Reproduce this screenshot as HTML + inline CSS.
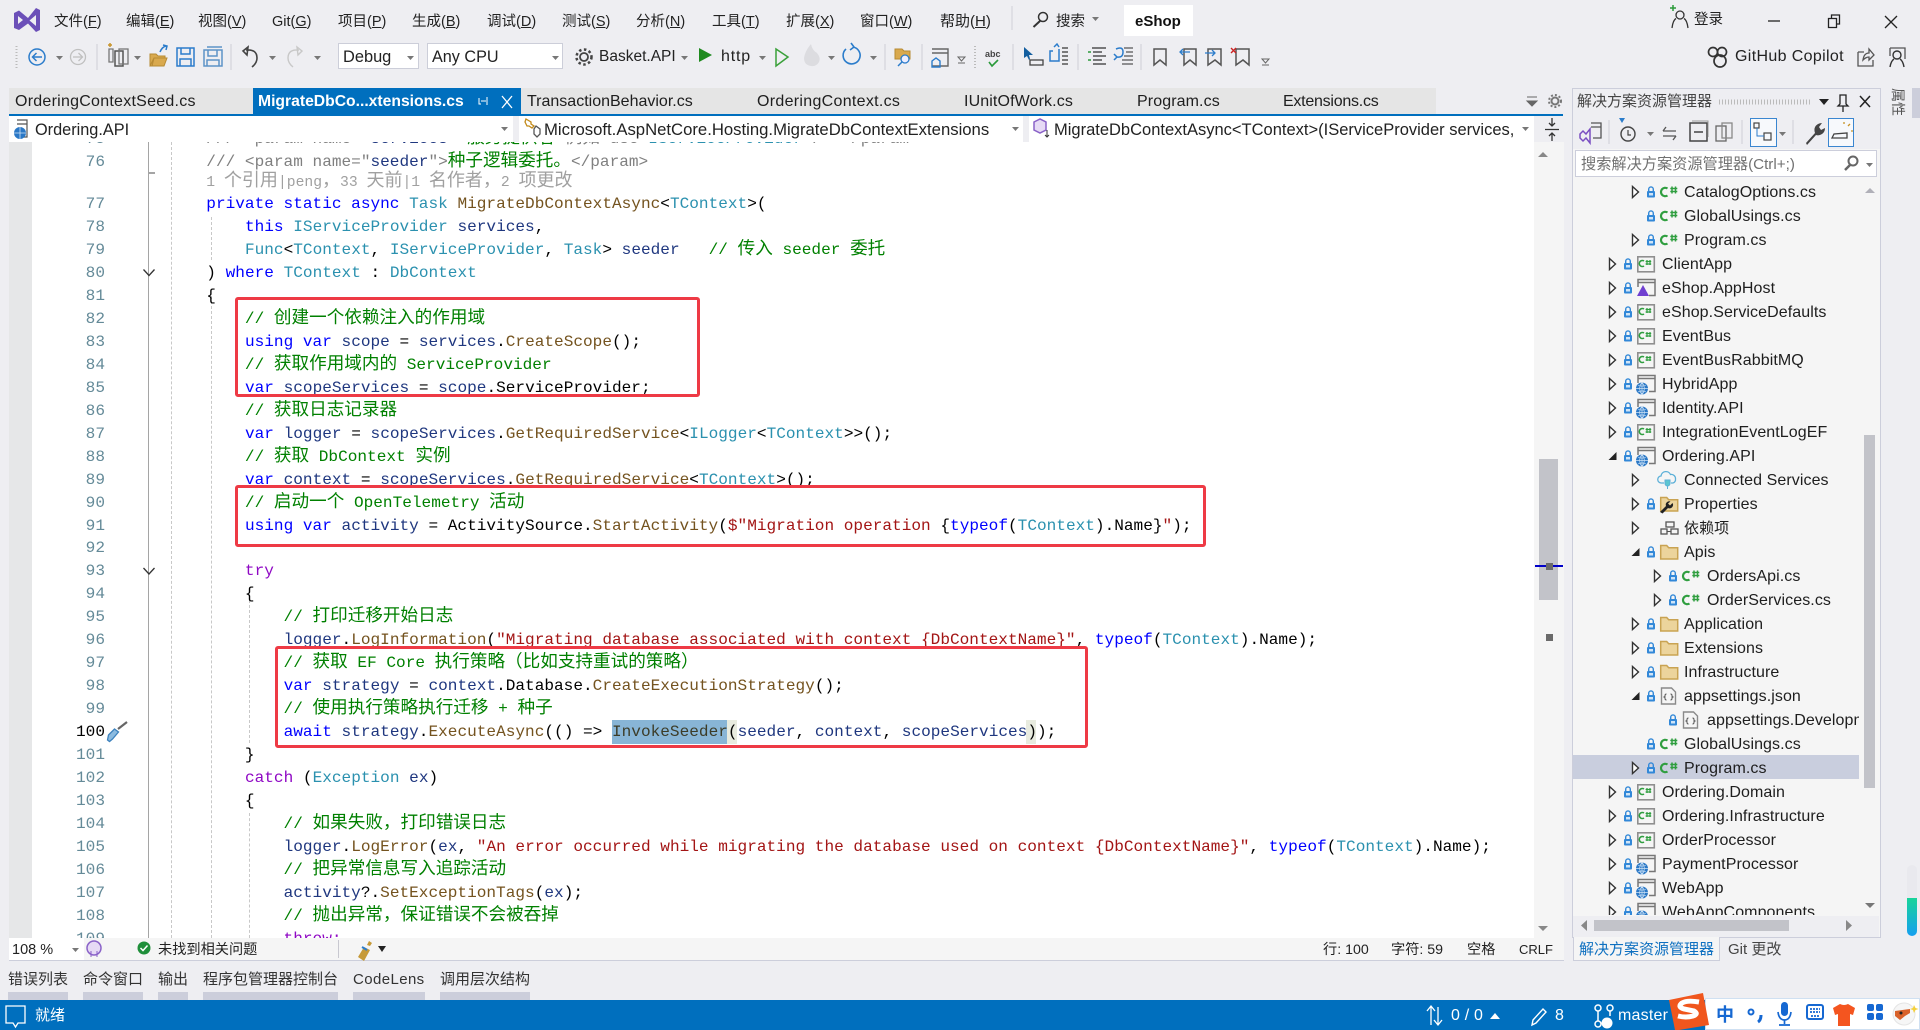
<!DOCTYPE html>
<html lang="zh"><head><meta charset="utf-8"><title>eShop</title>
<style>
html,body{margin:0;padding:0;width:1920px;height:1030px;overflow:hidden;background:#eeeef2}
body{position:relative;font-family:"Liberation Sans","Noto Sans CJK SC",sans-serif;font-size:15px;color:#222}
.b{position:absolute}
.t{position:absolute;white-space:nowrap;line-height:20px;height:20px}
u{text-decoration:underline}
.layer{position:absolute;left:0;top:0;width:1920px;height:1030px}
#code{clip-path:inset(142px 386px 92px 33px);font-family:"Liberation Mono","Noto Sans CJK SC",monospace;font-size:16.1px;color:#000}
.l{position:absolute;left:206.3px;margin-top:1px;height:23px;line-height:23px;white-space:pre}
.n{position:absolute;left:60px;margin-top:1px;width:45px;text-align:right;height:23px;line-height:23px;color:#648a98;font-family:"Liberation Mono",monospace;font-size:16.1px}
#code i{font-style:normal;font-family:"Noto Sans CJK SC",sans-serif;font-size:17.6px;line-height:0}
.k{color:#00f}.y{color:#2b91af}.m{color:#74531f}.v{color:#1f377f}.s{color:#a31515}.g{color:#008000}.p{color:#8f08c4}.d{color:#808080}
.box{position:absolute;border:3px solid #ee3a45;border-radius:3px;box-sizing:border-box}
#tree{clip-path:inset(178px 61px 115px 1573px)}
.r{position:absolute;white-space:nowrap;line-height:20px;height:20px;margin-top:1px;font-size:16px;letter-spacing:.08px;color:#1e1e1e}
.tab{position:absolute;top:92px;white-space:nowrap;font-size:16px;line-height:20px;color:#1e1e1e;letter-spacing:.3px}
.w{color:#fff}
.sh1{position:absolute;left:0;top:1px;width:0;height:0}
</style></head><body>

<!-- menu bar -->
<div class="sh1">
<div class="t" style="left:54px;top:11px;font-size:14.5px">文件(<u>F</u>)</div>
<div class="t" style="left:126px;top:11px;font-size:14.5px">编辑(<u>E</u>)</div>
<div class="t" style="left:198px;top:11px;font-size:14.5px">视图(<u>V</u>)</div>
<div class="t" style="left:272px;top:11px;font-size:14.5px">Git(<u>G</u>)</div>
<div class="t" style="left:338px;top:11px;font-size:14.5px">项目(<u>P</u>)</div>
<div class="t" style="left:412px;top:11px;font-size:14.5px">生成(<u>B</u>)</div>
<div class="t" style="left:487px;top:11px;font-size:14.5px">调试(<u>D</u>)</div>
<div class="t" style="left:562px;top:11px;font-size:14.5px">测试(<u>S</u>)</div>
<div class="t" style="left:636px;top:11px;font-size:14.5px">分析(<u>N</u>)</div>
<div class="t" style="left:712px;top:11px;font-size:14.5px">工具(<u>T</u>)</div>
<div class="t" style="left:786px;top:11px;font-size:14.5px">扩展(<u>X</u>)</div>
<div class="t" style="left:860px;top:11px;font-size:14.5px">窗口(<u>W</u>)</div>
<div class="t" style="left:940px;top:11px;font-size:15px">帮助(<u>H</u>)</div>
<div class="t" style="left:1056px;top:11px;font-size:14.5px">搜索</div>
</div>
<div class="b" style="left:1124px;top:5px;width:69px;height:31px;background:#fff"></div>
<div class="t" style="left:1135px;top:12px;font-size:15px;font-weight:bold;color:#111">eShop</div>
<div class="t" style="left:1694px;top:10px;font-size:14.5px">登录</div>

<!-- toolbar -->
<div class="b" style="left:338px;top:43px;width:81px;height:26px;background:#fff;border:1px solid #ccced9;box-sizing:border-box"></div>
<div class="t" style="left:343px;top:47px;font-size:16.4px">Debug</div>
<div class="b" style="left:427px;top:43px;width:136px;height:26px;background:#fff;border:1px solid #ccced9;box-sizing:border-box"></div>
<div class="t" style="left:432px;top:47px;font-size:16.2px">Any CPU</div>
<div class="t" style="left:599px;top:47px;font-size:15.5px">Basket.API</div>
<div class="t" style="left:721px;top:47px;font-size:16px;letter-spacing:.8px">http</div>
<div class="t" style="left:1735px;top:47px;font-size:16px;letter-spacing:.35px">GitHub Copilot</div>

<!-- document tabs -->
<div class="b" style="left:9px;top:88px;width:1427px;height:26px;background:#e5e5e5"></div>
<div class="b" style="left:253px;top:88px;width:268px;height:26px;background:#006fbe"></div>
<div class="b" style="left:9px;top:114px;width:1554px;height:2px;background:#006fbe"></div>
<div class="tab" style="left:15px;letter-spacing:.25px">OrderingContextSeed.cs</div>
<div class="tab" style="left:258px;color:#fff;font-weight:bold;letter-spacing:0;font-size:15.7px">MigrateDbCo...xtensions.cs</div>
<div class="tab" style="left:527px;letter-spacing:0">TransactionBehavior.cs</div>
<div class="tab" style="left:757px">OrderingContext.cs</div>
<div class="tab" style="left:964px;letter-spacing:.12px">IUnitOfWork.cs</div>
<div class="tab" style="left:1137px;letter-spacing:.1px">Program.cs</div>
<div class="tab" style="left:1283px;letter-spacing:-.25px">Extensions.cs</div>

<!-- nav dropdowns -->
<div class="b" style="left:9px;top:116px;width:504px;height:26px;background:#fff"></div>
<div class="b" style="left:519px;top:116px;width:504px;height:26px;background:#fff"></div>
<div class="b" style="left:1029px;top:116px;width:505px;height:26px;background:#fff"></div>
<div class="t" style="left:35px;top:120px;font-size:16.3px">Ordering.API</div>
<div class="t" style="left:544px;top:120px;font-size:16.7px">Microsoft.AspNetCore.Hosting.MigrateDbContextExtensions</div>
<div class="t" style="left:1054px;top:120px;font-size:16.5px">MigrateDbContextAsync&lt;TContext&gt;(IServiceProvider services,</div>

<!-- editor -->
<div class="b" style="left:9px;top:142px;width:23px;height:796px;background:#e6e7e8"></div>
<div class="b" style="left:32px;top:142px;width:1502px;height:796px;background:#fff"></div>
<div class="b" style="left:1534px;top:142px;width:30px;height:796px;background:#f5f5f5"></div>
<div class="b" style="left:1539px;top:459px;width:19px;height:141px;background:#c2c3c9"></div>
<div class="b" style="left:1535px;top:565px;width:28px;height:2px;background:#0000c8"></div>
<div class="b" style="left:1546px;top:563px;width:7px;height:7px;background:#6a6a6a"></div>
<div class="b" style="left:1546px;top:634px;width:7px;height:7px;background:#6a6a6a"></div>

<div class="layer" id="code">
<div class="b" style="left:147.500px;top:142px;width:1.5px;height:796px;background:#a5a5a5"></div>
<div class="b" style="left:147.500px;top:172px;width:7px;height:1.5px;background:#a5a5a5"></div>
<div class="b" style="left:171px;top:142px;height:796px;border-left:1px dashed #c8c8c8"></div>
<div class="b" style="left:211px;top:217px;height:43px;border-left:1px dashed #c8c8c8"></div>
<div class="b" style="left:211px;top:296px;height:642px;border-left:1px dashed #c8c8c8"></div>
<div class="b" style="left:249px;top:600px;height:143px;border-left:1px dashed #c8c8c8"></div>
<div class="b" style="left:249px;top:813px;height:125px;border-left:1px dashed #c8c8c8"></div>
<div class="b" style="left:611.5px;top:720px;width:115.5px;height:24px;background:#88b5d6"></div>
<div class="b" style="left:727px;top:720px;width:10px;height:24px;background:#e8ebdf"></div>
<div class="b" style="left:1026px;top:720px;width:10px;height:24px;background:#e8ebdf"></div>

<div class="n" style="top:127px">75</div><div class="l d" style="top:127px">/// &lt;param name="<span class="v">services</span>"&gt;<span class="g"><i>服务提供者</i></span> <i>例如</i> use <span class="y">IServiceProvider</span> /&gt; &lt;/param&gt;</div>
<div class="n" style="top:150px">76</div><div class="l d" style="top:150px">/// &lt;param name="<span class="v">seeder</span>"&gt;<span class="g"><i>种子逻辑委托。</i></span>&lt;/param&gt;</div>
<div class="l" style="top:171px;color:#a0a0a0;font-size:14.7px">1 <i style="font-size:18px">个引用</i>|peng<i style="font-size:18px">，</i>33 <i style="font-size:18px">天前</i>|1 <i style="font-size:18px">名作者，</i>2 <i style="font-size:18px">项更改</i></div>
<div class="n" style="top:192px">77</div><div class="l" style="top:192px"><span class="k">private static async</span> <span class="y">Task</span> <span class="m">MigrateDbContextAsync</span>&lt;<span class="y">TContext</span>&gt;(</div>
<div class="n" style="top:215px">78</div><div class="l" style="top:215px">    <span class="k">this</span> <span class="y">IServiceProvider</span> <span class="v">services</span>,</div>
<div class="n" style="top:238px">79</div><div class="l" style="top:238px">    <span class="y">Func</span>&lt;<span class="y">TContext</span>, <span class="y">IServiceProvider</span>, <span class="y">Task</span>&gt; <span class="v">seeder</span>   <span class="g">// <i>传入</i> seeder <i>委托</i></span></div>
<div class="n" style="top:261px">80</div><div class="l" style="top:261px">) <span class="k">where</span> <span class="y">TContext</span> : <span class="y">DbContext</span></div>
<div class="n" style="top:284px">81</div><div class="l" style="top:284px">{</div>
<div class="n" style="top:307px">82</div><div class="l g" style="top:307px">    // <i>创建一个依赖注入的作用域</i></div>
<div class="n" style="top:330px">83</div><div class="l" style="top:330px">    <span class="k">using var</span> <span class="v">scope</span> = <span class="v">services</span>.<span class="m">CreateScope</span>();</div>
<div class="n" style="top:353px">84</div><div class="l g" style="top:353px">    // <i>获取作用域内的</i> ServiceProvider</div>
<div class="n" style="top:376px">85</div><div class="l" style="top:376px">    <span class="k">var</span> <span class="v">scopeServices</span> = <span class="v">scope</span>.ServiceProvider;</div>
<div class="n" style="top:399px">86</div><div class="l g" style="top:399px">    // <i>获取日志记录器</i></div>
<div class="n" style="top:422px">87</div><div class="l" style="top:422px">    <span class="k">var</span> <span class="v">logger</span> = <span class="v">scopeServices</span>.<span class="m">GetRequiredService</span>&lt;<span class="y">ILogger</span>&lt;<span class="y">TContext</span>&gt;&gt;();</div>
<div class="n" style="top:445px">88</div><div class="l g" style="top:445px">    // <i>获取</i> DbContext <i>实例</i></div>
<div class="n" style="top:468px">89</div><div class="l" style="top:468px">    <span class="k">var</span> <span class="v">context</span> = <span class="v">scopeServices</span>.<span class="m">GetRequiredService</span>&lt;<span class="y">TContext</span>&gt;();</div>
<div class="n" style="top:491px">90</div><div class="l g" style="top:491px">    // <i>启动一个</i> OpenTelemetry <i>活动</i></div>
<div class="n" style="top:514px">91</div><div class="l" style="top:514px">    <span class="k">using var</span> <span class="v">activity</span> = ActivitySource.<span class="m">StartActivity</span>(<span class="s">$"Migration operation </span>{<span class="k">typeof</span>(<span class="y">TContext</span>).Name}<span class="s">"</span>);</div>
<div class="n" style="top:536px">92</div>
<div class="n" style="top:559px">93</div><div class="l p" style="top:559px">    try</div>
<div class="n" style="top:582px">94</div><div class="l" style="top:582px">    {</div>
<div class="n" style="top:605px">95</div><div class="l g" style="top:605px">        // <i>打印迁移开始日志</i></div>
<div class="n" style="top:628px">96</div><div class="l" style="top:628px">        <span class="v">logger</span>.<span class="m">LogInformation</span>(<span class="s">"Migrating database associated with context {DbContextName}"</span>, <span class="k">typeof</span>(<span class="y">TContext</span>).Name);</div>
<div class="n" style="top:651px">97</div><div class="l g" style="top:651px">        // <i>获取</i> EF Core <i>执行策略（比如支持重试的策略）</i></div>
<div class="n" style="top:674px">98</div><div class="l" style="top:674px">        <span class="k">var</span> <span class="v">strategy</span> = <span class="v">context</span>.Database.<span class="m">CreateExecutionStrategy</span>();</div>
<div class="n" style="top:697px">99</div><div class="l g" style="top:697px">        // <i>使用执行策略执行迁移</i> + <i>种子</i></div>
<div class="n" style="top:720px;color:#000">100</div><div class="l" style="top:720px">        <span class="k">await</span> <span class="v">strategy</span>.<span class="m">ExecuteAsync</span>(() =&gt; <span class="m" style="color:#3c3c28">InvokeSeeder</span>(<span class="v">seeder</span>, <span class="v">context</span>, <span class="v">scopeServices</span>));</div>
<div class="n" style="top:743px">101</div><div class="l" style="top:743px">    }</div>
<div class="n" style="top:766px">102</div><div class="l" style="top:766px">    <span class="p">catch</span> (<span class="y">Exception</span> <span class="v">ex</span>)</div>
<div class="n" style="top:789px">103</div><div class="l" style="top:789px">    {</div>
<div class="n" style="top:812px">104</div><div class="l g" style="top:812px">        // <i>如果失败，打印错误日志</i></div>
<div class="n" style="top:835px">105</div><div class="l" style="top:835px">        <span class="v">logger</span>.<span class="m">LogError</span>(<span class="v">ex</span>, <span class="s">"An error occurred while migrating the database used on context {DbContextName}"</span>, <span class="k">typeof</span>(<span class="y">TContext</span>).Name);</div>
<div class="n" style="top:858px">106</div><div class="l g" style="top:858px">        // <i>把异常信息写入追踪活动</i></div>
<div class="n" style="top:881px">107</div><div class="l" style="top:881px">        <span class="v">activity</span>?.<span class="m">SetExceptionTags</span>(<span class="v">ex</span>);</div>
<div class="n" style="top:904px">108</div><div class="l g" style="top:904px">        // <i>抛出异常，保证错误不会被吞掉</i></div>
<div class="n" style="top:927px">109</div><div class="l p" style="top:927px">        throw;</div>
</div>
<div class="box" style="left:235px;top:297px;width:465px;height:100px"></div>
<div class="box" style="left:235px;top:485px;width:971px;height:62px"></div>
<div class="box" style="left:275px;top:646px;width:813px;height:102px"></div>

<!-- editor status row -->
<div class="b" style="left:9px;top:938px;width:1555px;height:22px;background:#f5f5f5;border-bottom:1px solid #cccedb;box-sizing:content-box"></div>
<div class="b" style="left:9px;top:938px;width:75px;height:22px;background:#fff;border-bottom:1px solid #cccedb"></div>
<div class="t" style="left:12px;top:940px;font-size:14.5px">108 %</div>
<div class="t" style="left:158px;top:940px;font-size:14.2px">未找到相关问题</div>
<div class="b" style="left:338px;top:940px;width:1px;height:18px;background:#c8c8d0"></div>
<div class="t" style="left:1323px;top:940px;font-size:14.2px">行: 100</div>
<div class="t" style="left:1391px;top:940px;font-size:14.2px">字符: 59</div>
<div class="t" style="left:1467px;top:940px;font-size:14.2px">空格</div>
<div class="t" style="left:1519px;top:940px;font-size:13px">CRLF</div>

<!-- tool tabs -->
<div class="t" style="left:8px;top:970px;color:#333">错误列表</div>
<div class="t" style="left:83px;top:970px;color:#333">命令窗口</div>
<div class="t" style="left:158px;top:970px;color:#333">输出</div>
<div class="t" style="left:203px;top:970px;color:#333">程序包管理器控制台</div>
<div class="t" style="left:353px;top:970px;color:#333;letter-spacing:.4px">CodeLens</div>
<div class="t" style="left:440px;top:970px;color:#333">调用层次结构</div>
<div class="b" style="left:8px;top:992px;width:60px;height:8px;background:#cccedb"></div>
<div class="b" style="left:83px;top:992px;width:60px;height:8px;background:#cccedb"></div>
<div class="b" style="left:158px;top:992px;width:30px;height:8px;background:#cccedb"></div>
<div class="b" style="left:203px;top:992px;width:135px;height:8px;background:#cccedb"></div>
<div class="b" style="left:353px;top:992px;width:72px;height:8px;background:#cccedb"></div>
<div class="b" style="left:440px;top:992px;width:90px;height:8px;background:#cccedb"></div>

<!-- status bar -->
<div class="b" style="left:0;top:1000px;width:1920px;height:30px;background:#006fbe"></div>
<div class="t w" style="left:35px;top:1006px">就绪</div>
<div class="t w" style="left:1451px;top:1006px;font-size:16px;letter-spacing:.2px">0 / 0</div>
<div class="t w" style="left:1555px;top:1006px;font-size:16px">8</div>
<div class="t w" style="left:1618px;top:1006px;font-size:16px;letter-spacing:.2px">master</div>

<!-- solution explorer -->
<div class="b" style="left:1572px;top:88px;width:309px;height:850px;background:#f5f5f5;border:1px solid #cccedb;box-sizing:border-box"></div>
<div class="b" style="left:1573px;top:89px;width:307px;height:60px;background:#eeeef2"></div>
<div class="t" style="left:1577px;top:92px;font-size:15px;color:#444">解决方案资源管理器</div>
<div class="b" style="left:1575px;top:150px;width:302px;height:27px;background:#fff;border:1px solid #cccedb;box-sizing:border-box"></div>
<div class="t" style="left:1581px;top:155px;font-size:15.200px;color:#717171">搜索解决方案资源管理器(Ctrl+;)</div>
<div class="b" style="left:1864px;top:435px;width:11px;height:353px;background:#c2c3c9"></div>
<div class="b" style="left:1573px;top:916px;width:306px;height:21px;background:#eeeef2"></div>
<div class="b" style="left:1594px;top:920px;width:195px;height:11px;background:#c2c3c9"></div>
<div class="b" style="left:1573px;top:937px;width:147px;height:24px;background:#f5f5f5;border:1px solid #cccedb;border-top:none;box-sizing:border-box"></div>
<div class="t" style="left:1579px;top:940px;font-size:15px;color:#0e70c0">解决方案资源管理器</div>
<div class="t" style="left:1728px;top:940px;font-size:15px;color:#444">Git 更改</div>

<div class="layer" id="tree">
<div class="b" style="left:1573px;top:755px;width:286px;height:24px;background:#c9cede"></div>
<div class="r" style="left:1684px;top:182px">CatalogOptions.cs</div>
<div class="r" style="left:1684px;top:206px">GlobalUsings.cs</div>
<div class="r" style="left:1684px;top:230px">Program.cs</div>
<div class="r" style="left:1662px;top:254px">ClientApp</div>
<div class="r" style="left:1662px;top:278px">eShop.AppHost</div>
<div class="r" style="left:1662px;top:302px">eShop.ServiceDefaults</div>
<div class="r" style="left:1662px;top:326px">EventBus</div>
<div class="r" style="left:1662px;top:350px">EventBusRabbitMQ</div>
<div class="r" style="left:1662px;top:374px">HybridApp</div>
<div class="r" style="left:1662px;top:398px">Identity.API</div>
<div class="r" style="left:1662px;top:422px">IntegrationEventLogEF</div>
<div class="r" style="left:1662px;top:446px">Ordering.API</div>
<div class="r" style="left:1684px;top:470px">Connected Services</div>
<div class="r" style="left:1684px;top:494px">Properties</div>
<div class="r" style="left:1684px;top:518px;font-size:15px">依赖项</div>
<div class="r" style="left:1684px;top:542px">Apis</div>
<div class="r" style="left:1707px;top:566px">OrdersApi.cs</div>
<div class="r" style="left:1707px;top:590px">OrderServices.cs</div>
<div class="r" style="left:1684px;top:614px">Application</div>
<div class="r" style="left:1684px;top:638px">Extensions</div>
<div class="r" style="left:1684px;top:662px">Infrastructure</div>
<div class="r" style="left:1684px;top:686px">appsettings.json</div>
<div class="r" style="left:1707px;top:710px">appsettings.Development.json</div>
<div class="r" style="left:1684px;top:734px">GlobalUsings.cs</div>
<div class="r" style="left:1684px;top:758px">Program.cs</div>
<div class="r" style="left:1662px;top:782px">Ordering.Domain</div>
<div class="r" style="left:1662px;top:806px">Ordering.Infrastructure</div>
<div class="r" style="left:1662px;top:830px">OrderProcessor</div>
<div class="r" style="left:1662px;top:854px">PaymentProcessor</div>
<div class="r" style="left:1662px;top:878px">WebApp</div>
<div class="r" style="left:1662px;top:902px">WebAppComponents</div>

<svg class="layer" width="1920" height="1030" viewBox="0 0 1920 1030">
<defs>
<g id="a"><path d="M-2.5-5.5 3.5 0-2.5 5.5Z" fill="#fff" stroke="#333" stroke-width="1.4"/></g>
<g id="o"><path d="M-3.5 4H4.5V-4Z" fill="#222"/></g>
<g id="lk"><rect x="12" y="-1" width="8" height="6.5" rx="1" fill="#3288d8"/><rect x="14" y="1" width="4" height="2.5" fill="#cfe4f7"/><path d="M13.7-1v-1.8a2.3 2.3 0 0 1 4.6 0V-1" fill="none" stroke="#3288d8" stroke-width="1.4"/></g>
<g id="cs"><path d="M32.5-3.5a4.2 4.2 0 1 0 0 7" fill="none" stroke="#2f9e3f" stroke-width="2.200"/><path d="M37-5.5v7M40.5-5.5v7M35.3-3.5h7M35.3-.5h7" stroke="#2f9e3f" stroke-width="1.500" fill="none"/></g>
<g id="pr"><rect x="25.8" y="-7.2" width="16.5" height="15" fill="#f5f5f5" stroke="#8f8f8f" stroke-width="1.6"/><path d="M32-3a3 3 0 1 0 0 5" fill="none" stroke="#2f9e3f" stroke-width="1.6"/><path d="M35-4v5M38-4v5M33.6-2.500h5.6M33.6 0h5.6" stroke="#2f9e3f" stroke-width="1.200" fill="none"/></g>
<g id="wn"><path d="M26-1V-8.5H43V7.5H37M26-5.5H43" fill="none" stroke="#777" stroke-width="1.5"/></g>
<g id="gl"><circle cx="30" cy="4.5" r="6" fill="#2a78c6"/><path d="M24 4.5h12M30-1.5v12M26 1a8 8 0 0 0 8 0M26 8a8 8 0 0 1 8 0M30-1.5a9 9 0 0 0 0 12M30-1.5a9 9 0 0 1 0 12" fill="none" stroke="#cfe3f6" stroke-width=".7"/></g>
<g id="fd"><path d="M25.7-6.5h6l2 2.2h9v11.3H25.7Z" fill="#ecd49c" stroke="#c9a352" stroke-width="1.5"/></g>
<g id="js"><path d="M26.5-8h10l4 4V8h-14Z" fill="#f5f5f5" stroke="#8a8a8a" stroke-width="1.4"/><path d="M31.5-2q-1.5 0-1.5 1.5v1L29 1l1 .5v1q0 1.5 1.5 1.5M35.5-2q1.5 0 1.5 1.5v1L38 1l-1 .5v1q0 1.5-1.5 1.5" fill="none" stroke="#555" stroke-width="1"/></g>
<g id="rc"><use href="#a"/><use href="#lk"/><use href="#cs"/></g>
<g id="nc"><use href="#lk"/><use href="#cs"/></g>
<g id="rp"><use href="#a"/><use href="#lk"/><use href="#pr"/></g>
<g id="rw"><use href="#a"/><use href="#lk"/><use href="#wn"/><use href="#gl"/></g>
<g id="rf"><use href="#a"/><use href="#lk"/><use href="#fd"/></g>
</defs>
<use href="#rc" x="1635" y="192"/><use href="#nc" x="1635" y="216"/><use href="#rc" x="1635" y="240"/>
<use href="#rp" x="1612" y="264"/>
<g transform="translate(1612 288)"><use href="#a"/><use href="#lk"/><use href="#wn"/><path d="M31-3 37 8H25Z" fill="#6f3fd0"/></g>
<use href="#rp" x="1612" y="312"/><use href="#rp" x="1612" y="336"/><use href="#rp" x="1612" y="360"/>
<use href="#rw" x="1612" y="384"/><use href="#rw" x="1612" y="408"/><use href="#rp" x="1612" y="432"/>
<g transform="translate(1612 456)"><use href="#o"/><use href="#lk"/><use href="#wn"/><use href="#gl"/></g>
<g transform="translate(1635 480)"><use href="#a"/><path d="M29 3h-2.5a3.5 3.5 0 0 1-.5-7 5 5 0 0 1 9.5-1.5 4.2 4.2 0 0 1 5 4.5 3.5 3.5 0 0 1-2.5 4H36" fill="none" stroke="#5cb0d8" stroke-width="1.3"/><path d="M30 0v3.5a2.5 2.5 0 0 0 5 0V0ZM32.5 6v3" fill="#5cc6d0" stroke="#5cb0d8"/></g>
<g transform="translate(1635 504)"><use href="#rf"/><path d="M25 8l6-6a3.5 3.5 0 0 1 4.5-4.500L33-.5l2 2 2.500-2.500A3.500 3.500 0 0 1 33 4l-5.500 5.500Z" fill="#222"/></g>
<g transform="translate(1635 528)"><use href="#a"/><rect x="26" y="1" width="6" height="5" fill="none" stroke="#555" stroke-width="1.300"/><rect x="36" y="1" width="7" height="5" fill="none" stroke="#555" stroke-width="1.300"/><rect x="31" y="-6" width="8" height="5" fill="none" stroke="#555" stroke-width="1.300"/><path d="M32 3.500h4" stroke="#555"/></g>
<g transform="translate(1635 552)"><use href="#o"/><use href="#lk"/><use href="#fd"/></g>
<use href="#rc" x="1657" y="576"/><use href="#rc" x="1657" y="600"/>
<use href="#rf" x="1635" y="624"/><use href="#rf" x="1635" y="648"/><use href="#rf" x="1635" y="672"/>
<g transform="translate(1635 696)"><use href="#o"/><use href="#lk"/><use href="#js"/></g>
<g transform="translate(1657 720)"><use href="#lk"/><use href="#js"/></g>
<use href="#nc" x="1635" y="744"/><use href="#rc" x="1635" y="768"/>
<use href="#rp" x="1612" y="792"/><use href="#rp" x="1612" y="816"/><use href="#rp" x="1612" y="840"/>
<use href="#rw" x="1612" y="864"/><use href="#rw" x="1612" y="888"/><use href="#rw" x="1612" y="912"/>
</svg>
</div>

<!-- right strip -->
<div class="b" style="left:1890px;top:88px;width:15px;font-size:14px;line-height:15px;color:#555;writing-mode:vertical-rl;text-orientation:sideways;white-space:nowrap">属性</div>
<div class="b" style="left:1912px;top:88px;width:8px;height:30px;background:#cccedb"></div>

<!-- IME -->
<div class="b" style="left:1705px;top:998px;width:215px;height:32px;background:#fff;border:1px solid #cfe0f2;box-sizing:border-box"></div>
<div class="t" style="left:1716px;top:1005px;font-size:18px;font-weight:bold;color:#1668d2">中</div>

<!-- icons -->
<svg class="layer" width="1920" height="1030" viewBox="0 0 1920 1030" fill="none">
<!-- VS logo -->
<path d="M14 13 19 10.500 28 18 36 8 40 10V30L36 32 28 23.500 19 30 14 28ZM18 16V24L23 20ZM29.500 20.500 36 26V15Z" fill="#6b4fb8" fill-rule="evenodd"/>
<!-- title icons -->
<path d="M1012 6v24" stroke="#d0d0d8"/>
<circle cx="1043" cy="17" r="4.500" stroke="#333" stroke-width="1.500"/><path d="M1040 21l-6.500 6" stroke="#333" stroke-width="2"/>
<path d="M1092 17h7l-3.500 4Z" fill="#777"/>
<path d="M1670 8h6M1673 5v6" stroke="#2a9a3a" stroke-width="1.500"/><circle cx="1680" cy="15" r="4" stroke="#333" stroke-width="1.300"/><path d="M1672 28q1-8 4-9.500M1688 28q-1-8-4-9.500" stroke="#333" stroke-width="1.300"/>
<path d="M1768 21h12" stroke="#222" stroke-width="1.300"/>
<path d="M1828.500 18.500h8v9h-8ZM1831.500 18v-3h8v9h-3" stroke="#222" stroke-width="1.300"/>
<path d="M1885 16l12 12M1897 16l-12 12" stroke="#222" stroke-width="1.300"/>
<!-- toolbar icons -->
<path d="M16.500 46v22" stroke="#bbb" stroke-width="2" stroke-dasharray="1 2"/>
<circle cx="37" cy="57" r="8" stroke="#2b7ccb" stroke-width="1.500"/><path d="M42 57h-9M36.500 53l-4 4 4 4" stroke="#2b7ccb" stroke-width="1.500"/>
<path d="M56 56h7l-3.500 4ZM134 56h7l-3.500 4ZM269 56h7l-3.500 4ZM314 56h7l-3.500 4ZM681 56h7l-3.500 4ZM759 56h7l-3.500 4ZM828 56h7l-3.500 4ZM870 56h7l-3.500 4Z" fill="#777"/>
<circle cx="78" cy="57" r="7.500" stroke="#c0c0c0" stroke-width="1.300"/><path d="M73 57h9M78.500 53l4 4-4 4" stroke="#c0c0c0" stroke-width="1.300"/>
<path d="M97 44v26M231 44v26M885 44v26M922 44v26M1013 44v26M1078 44v26M1141 44v26" stroke="#cfcfd6"/>
<path d="M109 49h4v13h-4Z" stroke="#777" stroke-width="1.300"/><rect x="115" y="51" width="8" height="15" stroke="#555" stroke-width="1.500"/><rect x="119" y="49" width="9" height="15" stroke="#777" stroke-width="1.300"/><path d="M108 45h4M110 43v4" stroke="#c8942a" stroke-width="1.500"/>
<path d="M150 66V54h6l2 2h7v2h-11l-2 8Zm4-8h13l-3 8h-14Z" fill="#d9a94e" stroke="#b78a33"/><path d="M160 52q2-5 6-6M163 45l4 1-1 4" stroke="#2b7ccb" stroke-width="1.500"/>
<path d="M177 48h17v18h-17ZM181 48v6h9v-6M180 59h11v7h-11Z" stroke="#2b7ccb" stroke-width="1.500"/>
<path d="M204 50h18v16h-18ZM208 50v6h9v-6M207 60h12v6h-12ZM207 47h15" stroke="#5d93c8" stroke-width="1.500"/>
<path d="M243 51l5-4-1 8ZM246 50q11-1 11 8 0 5-5 9" stroke="#444" stroke-width="1.600" fill="none"/>
<path d="M302 51l-5-4 1 8ZM299 50q-11-1-11 8 0 5 5 9" stroke="#c8c8c8" stroke-width="1.400"/>
<path d="M407 56h7l-3.500 4ZM552 56h7l-3.500 4Z" fill="#777"/>
<circle cx="584" cy="57" r="4" stroke="#444" stroke-width="1.800"/><circle cx="584" cy="57" r="7.500" stroke="#444" stroke-width="2.500" stroke-dasharray="2.500 2.500"/>
<path d="M699 48 712 55 699 62Z" fill="#1f8a1f" />
<path d="M776 49 788 57 776 66Z" stroke="#3aa03a" stroke-width="1.500"/>
<path d="M811 44q1 6 6 9 4 5 2 9-3 5-8 4-7-1-7-8 1-7 7-14Z" fill="#dcdce0"/>
<path d="M846 49a8.500 8.500 0 1 0 7-2M851 43l3 4-4 3" stroke="#2b7ccb" stroke-width="1.600"/>
<path d="M895 49h7l2 2h6v8h-15Z" fill="#d9a94e" stroke="#b78a33"/><circle cx="905" cy="59" r="4" fill="#eef" stroke="#2b7ccb" stroke-width="1.300"/><path d="M902 62l-4 4" stroke="#2b7ccb" stroke-width="1.500"/>
<path d="M932 49h16v17h-16M932 53h16" stroke="#666" stroke-width="1.400"/><path d="M932 61l4-3 4 3v6h-8Z" stroke="#2b7ccb" stroke-width="1.400"/>
<path d="M958 57h7l-3.500 4ZM958 63h7" stroke="#666"/>
<path d="M975 46v22" stroke="#bbb" stroke-width="2" stroke-dasharray="1 2"/>
<text x="985" y="57" font-family="Liberation Sans" font-size="9" font-weight="bold" fill="#444">abc</text><path d="M989 62l3 4 6-6" stroke="#2a9a3a" stroke-width="1.600"/>
<path d="M1024 47v11l3-2 2 4 1-1-1-4h4Z" fill="#135e9f"/><rect x="1030" y="60" width="13" height="5" stroke="#444" stroke-width="1.300"/>
<path d="M1059 49v12h-9v-10h3M1054 47l3-3 2 3" stroke="#2b7ccb" stroke-width="1.500"/><path d="M1062 48h6M1062 52h6M1062 56h6M1062 60h6M1062 64h6" stroke="#555" stroke-width="1.500"/>
<path d="M1092 48h14M1093 52h9M1093 56h13M1093 60h9M1093 64h13" stroke="#333" stroke-width="1.300"/><path d="M1088 52h3M1088 60h3" stroke="#2a9a3a" stroke-width="1.500"/>
<path d="M1116 49q7-3 7 3t-6 5M1114 54l3 3-3 3" stroke="#2b7ccb" stroke-width="1.500"/><path d="M1124 48h9M1126 52h7M1124 56h9M1122 60h11M1122 64h11" stroke="#555" stroke-width="1.300"/>
<path d="M1154 49h12v16l-6-5-6 5Z" stroke="#555" stroke-width="1.500"/>
<path d="M1184 49h12v16l-6-5-6 5Z" stroke="#555" stroke-width="1.500"/><path d="M1190 52h-10M1183 49l-3 3 3 3" stroke="#2b7ccb" stroke-width="1.300"/>
<path d="M1208 49h13v16l-6-5-7 5Z" stroke="#555" stroke-width="1.500"/><path d="M1205 53h10M1212 50l3 3-3 3" stroke="#2b7ccb" stroke-width="1.300"/>
<path d="M1236 49h13v16l-6-5-7 5Z" stroke="#555" stroke-width="1.500"/><path d="M1231 48l5 5M1236 48l-5 5" stroke="#c22" stroke-width="1.400"/>
<path d="M1262 59h7l-3.500 4ZM1262 65h7" stroke="#666"/>
<circle cx="1713" cy="52" r="4.500" stroke="#333" stroke-width="1.700"/><circle cx="1722" cy="52" r="4.500" stroke="#333" stroke-width="1.700"/><circle cx="1720" cy="61" r="6" stroke="#333" stroke-width="1.700"/>
<path d="M1858 52h6M1858 52v14h15v-6M1863 60q1-7 6-7v-4l5 6-5 5v-3q-3 0-6 3Z" stroke="#555" stroke-width="1.300"/>
<path d="M1890 48h15v11M1890 48v8" stroke="#555" stroke-width="1.300"/><circle cx="1897" cy="55" r="4" stroke="#333" stroke-width="1.400"/><path d="M1890 67q1-6 4-8M1904 67q-1-6-4-8" stroke="#333" stroke-width="1.400"/>
<!-- doc tab extras -->
<path d="M481 101h5M487 97v8M479 98v6h2" stroke="#fff" stroke-width="1"/>
<path d="M502 96l10 12M512 96l-10 12" stroke="#fff" stroke-width="1.300"/>
<path d="M1527 97h10M1527 101h10l-5 5Z" fill="#666" stroke="#666"/>
<circle cx="1555" cy="101" r="3.500" stroke="#777" stroke-width="2"/><circle cx="1555" cy="101" r="6" stroke="#777" stroke-width="2" stroke-dasharray="2 2"/>
<!-- nav -->
<path d="M501 127h7l-3.500 4ZM1012 127h7l-3.500 4ZM1522 127h7l-3.500 4Z" fill="#777"/>
<path d="M17 120h10v17h-10M17 124h10" stroke="#555" stroke-width="1.200"/><circle cx="20" cy="133" r="6" fill="#2a78c6"/><path d="M14 133h12M20 127v12" stroke="#cfe3f6" stroke-width=".8"/>
<path d="M526 119l5 3v2l3 2-2 2-3-2h-2l-2-4Z" stroke="#c28a1a" stroke-width="1.300"/><path d="M536 126l4 3v5l-3 3-3-3v-5Z" stroke="#555" stroke-width="1.300"/>
<path d="M1034 122l6-3 6 3v8l-6 3-6-3Z" stroke="#8a62c8" stroke-width="1.500" fill="#e6daf5"/><path d="M1047 130v7M1045 135l2 2 2-2" stroke="#333"/>
<path d="M1545 129.500h14M1552 118v8M1549 123l3 3 3-3M1552 141v-8M1549 136l3-3 3 3" stroke="#333" stroke-width="1.300"/>
<!-- solution header -->
<path d="M1719 102h92" stroke="#bbb" stroke-width="5" stroke-dasharray="1 2"/>
<path d="M1819 99h10l-5 6Z" fill="#222"/>
<path d="M1840 95h6v9l2 2h-10l2-2Zm3 11v6" stroke="#222" stroke-width="1.300"/>
<path d="M1860 96l10 11M1870 96l-10 11" stroke="#222" stroke-width="1.500"/>
<!-- solution toolbar -->
<path d="M1609 120v24M1742 120v24M1793 120v24" stroke="#cfcfd6"/>
<path d="M1591 123h10v15h-8M1591 127h10" stroke="#555" stroke-width="1.300"/><path d="M1580 134l3-3 3 3 4-5v14l-4-5-3 3-3-3Z" stroke="#7a4ec2" stroke-width="1.500"/>
<path d="M1619 118h6l-3 5Z" fill="#2b7ccb"/><circle cx="1628" cy="134" r="7" stroke="#444" stroke-width="1.400"/><path d="M1628 130v5h3" stroke="#444" stroke-width="1.200"/>
<path d="M1647 132h7l-3.500 4ZM1779 132h7l-3.500 4Z" fill="#777"/>
<path d="M1663 131h13M1666 127l-3 4M1663 136h13M1676 136l-3 4" stroke="#555" stroke-width="1.300"/>
<rect x="1690" y="123" width="17" height="18" stroke="#444" stroke-width="1.500"/><path d="M1694 132h9" stroke="#444" stroke-width="1.500"/><path d="M1692 121h16v16" stroke="#999"/>
<rect x="1716" y="126" width="10" height="15" stroke="#666" stroke-width="1.300"/><rect x="1722" y="123" width="10" height="15" stroke="#888" stroke-width="1.300"/>
<rect x="1750.500" y="118.500" width="26" height="28" fill="#f7f9fc" stroke="#3a86d0"/>
<rect x="1754" y="123" width="5" height="5" stroke="#444" stroke-width="1.200"/><rect x="1764" y="133" width="7" height="7" stroke="#444" stroke-width="1.200"/><path d="M1757 128v8h7" stroke="#2b7ccb"/>
<path d="M1806 143l9-10q-2-6 3-9 2-1 4-1l-3 4 2 3 4-2q0 4-3 6-3 2-6 1l-9 10Z" fill="#444"/>
<rect x="1828.500" y="118.500" width="25" height="28" fill="#f7f9fc" stroke="#3a86d0"/>
<path d="M1832 138h15v-5l-13 1Z" stroke="#444" stroke-width="1.300"/><path d="M1848 126l2-2M1851 131h2M1844 124v-2" stroke="#c8942a" stroke-width="1.300"/>
<!-- search + scroll arrows -->
<circle cx="1853" cy="161" r="4.500" stroke="#666" stroke-width="2"/><path d="M1850 165l-5 5" stroke="#666" stroke-width="2.500"/>
<path d="M1866 163h7l-3.500 4Z" fill="#777"/>
<path d="M1865 193l5-5 5 5Z" fill="#b0b0b8"/>
<path d="M1865 903l5 5 5-5Z" fill="#777"/>
<path d="M1587 920l-6 5.500 6 5.500ZM1846 920l6 5.500-6 5.500Z" fill="#888"/>
<path d="M1538 157l5-5 5 5ZM1538 926l5 5 5-5Z" fill="#888"/>
<!-- chevrons -->
<path d="M143.500 269.500l5.500 6 5.500-6M143.500 568l5.500 6 5.500-6" stroke="#333" stroke-width="1.300"/>
<path d="M107.500 740l1-5 6-6 4 3-6 7-3 2.500Z" fill="#8cbbe0" stroke="#3d82bd" stroke-width="1.300"/><path d="M118 729l9-7" stroke="#666" stroke-width="2.200"/>
<!-- status row icons -->
<path d="M72 948h7l-3.500 4Z" fill="#777"/>
<circle cx="94" cy="948" r="7" stroke="#8a62c8" stroke-width="1.500" fill="#e6daf5"/><path d="M91 957v-6M97 957v-6" stroke="#8a62c8"/>
<circle cx="144" cy="948" r="6.500" fill="#1f8f3a"/><path d="M140.500 948l2.500 2.500 4.500-5" stroke="#fff" stroke-width="1.500"/>
<path d="M358 957l6-10 6 3-6 11ZM367 945l2-4 3 2-2 3" fill="#c69a38"/><path d="M362 947l5 3" stroke="#2b7ccb" stroke-width="2"/>
<path d="M378 946h8l-4 6Z" fill="#222"/>
<!-- status bar icons -->
<path d="M6 1006h19v17h-7l-2.500 4-2.500-4H6Z" stroke="#fff" stroke-width="1.300"/>
<path d="M1431 1025v-18M1427 1011l4-5 4 5M1438 1007v18M1434 1020l4 5 4-5" stroke="#fff" stroke-width="1.300"/>
<path d="M1490 1019l5-6 5 6Z" fill="#fff"/>
<path d="M1532 1025l1-5 10-11 3 3-10 11Z" stroke="#fff" stroke-width="1.400"/>
<circle cx="1598" cy="1008" r="3" stroke="#fff" stroke-width="1.500"/><circle cx="1610" cy="1008" r="3" stroke="#fff" stroke-width="1.500"/><circle cx="1598" cy="1024" r="3" stroke="#fff" stroke-width="1.500"/><circle cx="1607" cy="1023" r="5.500" fill="#fff"/><path d="M1598 1011v10M1610 1011v5" stroke="#fff" stroke-width="1.500"/>
<!-- sogou -->
<path d="M1669 1000 1703 993 1709 1025 1679 1030 1675 1030Z" fill="#f0561d"/>
<path d="M1699 1002q-12-2-17 1-5 4 2 6l10 2q5 3-1 5-7 2-15 0" stroke="#fff" stroke-width="5"/>
<!-- ime icons -->
<circle cx="1751" cy="1012" r="2.500" stroke="#1668d2" stroke-width="2"/><path d="M1761 1015q0 5-3 7" stroke="#1668d2" stroke-width="3"/>
<rect x="1781" y="1002" width="7" height="14" rx="3.500" fill="#1668d2"/><path d="M1778 1012q1 8 6.500 8t6.500-8M1784.500 1020v4M1779 1025h11" stroke="#1668d2" stroke-width="1.700"/>
<rect x="1807" y="1005" width="16" height="14" rx="2" stroke="#1668d2" stroke-width="2"/><path d="M1810 1009h10M1810 1012h10M1811 1016h8" stroke="#1668d2" stroke-width="1.700" stroke-dasharray="2 1"/>
<path d="M1833 1008l7-4q4 2 8 0l7 4-2 7-3-1v12h-12v-12l-3 1Z" fill="#f4551f"/>
<rect x="1867" y="1004" width="7" height="7" rx="2" fill="#1668d2"/><rect x="1876" y="1004" width="7" height="7" rx="2" fill="#1668d2"/><rect x="1867" y="1013" width="7" height="7" rx="2" fill="#1668d2"/><rect x="1876" y="1013" width="7" height="7" rx="2" fill="#1668d2"/>
<circle cx="1904" cy="1014" r="11" fill="#f6f6f6" stroke="#e4e4e4"/><path d="M1895 1011l15-2v4l-5 3-5 4-5-4Z" fill="#d9622a"/><circle cx="1901" cy="1013" r="1.500" fill="#222"/><path d="M1914 1005l1.500 3 3 1-3 1-1.500 3-1-3-3-1 3-1Z" fill="#f4d03a"/>
<!-- side progress -->
<rect x="1907" y="865" width="10" height="71" rx="5" fill="#e9e9ee"/>
<defs><linearGradient id="pg" x1="0" y1="0" x2="0" y2="1"><stop offset="0" stop-color="#18d49a"/><stop offset="1" stop-color="#159ff0"/></linearGradient></defs>
<path d="M1907 898h10v33a5 5 0 0 1-10 0Z" fill="url(#pg)"/>
</svg>
</body></html>
